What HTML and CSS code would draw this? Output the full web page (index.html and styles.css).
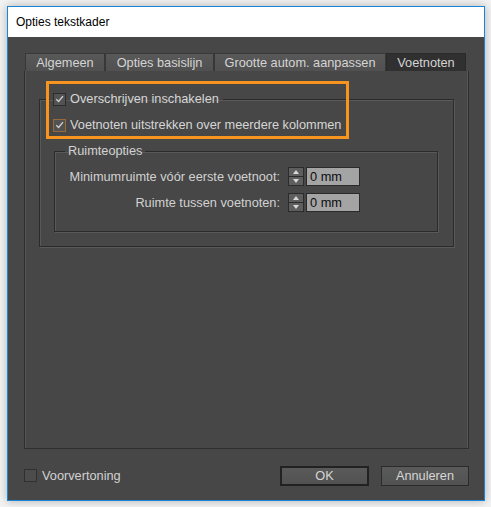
FILE: index.html
```html
<!DOCTYPE html>
<html>
<head>
<meta charset="utf-8">
<link rel="stylesheet" href="styles.css">
</head>
<body>
<div class="window">
  <div class="titlebar">Opties tekstkader</div>
  <div class="client">
    <div class="tabs">
      <div class="tab w1">Algemeen</div>
      <div class="tab w2">Opties basislijn</div>
      <div class="tab w3">Grootte autom. aanpassen</div>
      <div class="tab w4 active">Voetnoten</div>
    </div>
    <div class="panel">
      <fieldset class="group outer">
        <legend class="cbrow"><span class="cb checked"><svg viewBox="0 0 12 12" width="12" height="12"><path d="M2.5 6.2 L5 8.7 L9.8 2.8" fill="none" stroke="#cfcfcf" stroke-width="1.5"/></svg></span>Overschrijven inschakelen</legend>
        <div class="cbrow second"><span class="cb checked focus"><svg viewBox="0 0 12 12" width="12" height="12"><path d="M2.5 6.2 L5 8.7 L9.8 2.8" fill="none" stroke="#cfcfcf" stroke-width="1.5"/></svg></span>Voetnoten uitstrekken over meerdere kolommen</div>
        <fieldset class="group inner">
          <legend class="plain">Ruimteopties</legend>
          <div class="field">
            <span class="lbl">Minimumruimte vóór eerste voetnoot:</span>
            <span class="spin"><span class="half"><span class="up"></span></span><span class="half"><span class="down"></span></span></span>
            <span class="input">0 mm</span>
          </div>
          <div class="field">
            <span class="lbl">Ruimte tussen voetnoten:</span>
            <span class="spin"><span class="half"><span class="up"></span></span><span class="half"><span class="down"></span></span></span>
            <span class="input">0 mm</span>
          </div>
        </fieldset>
      </fieldset>
      <div class="highlight"></div>
    </div>
    <div class="footer">
      <div class="preview"><span class="cb"></span>Voorvertoning</div>
      <div class="buttons">
        <div class="btn ok">OK</div>
        <div class="btn">Annuleren</div>
      </div>
    </div>
  </div>
</div>
</body>
</html>
```

FILE: styles.css
```css
html, body {
  margin: 0;
  padding: 0;
  background: #f3f3f3;
}
body {
  width: 491px;
  height: 507px;
  overflow: hidden;
  font-family: "Liberation Sans", Arial, sans-serif;
  font-size: 12.75px;
}
.window {
  margin: 6px 0 0 7px;
  width: 478px;
  height: 495px;
  box-sizing: border-box;
  border: 1px solid #1a84d6;
  box-shadow: 0 0 9px rgba(0,0,0,0.28);
  display: flex;
  flex-direction: column;
  background: #474747;
}
.titlebar {
  height: 30px;
  background: #ffffff;
  color: #000;
  font-size: 12px;
  line-height: 30px;
  padding-left: 8px;
}
.client {
  flex: 1;
  display: flex;
  flex-direction: column;
  padding: 16px 15px 14px 16px;
  color: #d2d2d2;
}
.tabs {
  display: flex;
  height: 18px;
  margin-left: 1px;
}
.tab {
  box-sizing: border-box;
  height: 18px;
  line-height: 17px;
  text-align: center;
  border: 1px solid #383838;
  border-bottom: none;
  background: linear-gradient(#595959, #505050);
  color: #d4d4d4;
}
.tab.w1 { width: 80px; }
.tab.w2 { width: 109px; }
.tab.w3 { width: 172px; }
.tab.w4 { width: 80px; }
.tab.active {
  background: #303030;
  border-color: #2a2a2a;
}
.panel {
  flex: 1;
  position: relative;
  border: 1px solid #2e2e2e;
  border-top: none;
  box-shadow: inset 1px 0 0 #555, inset -1px 0 0 #555;
  padding: 21px 14px 0 14px;
}
.group {
  margin: 0;
  border: 1px solid #2b2b2b;
  box-shadow: 1px 1px 0 #595959, inset 1px 1px 0 #595959;
  min-width: 0;
}
.outer {
  padding: 0 15px 14px 14px;
}
.inner {
  margin-top: 12px;
  padding: 0 0 19px 0;
}
legend {
  line-height: 14px;
  height: 14px;
}
.cbrow {
  display: flex;
  align-items: center;
  line-height: 14px;
  color: #d6d6d6;
}
legend.cbrow {
  margin-left: -4px;
  padding: 0 4px 0 3px;
}
.cbrow.second {
  margin-top: 12px;
  margin-left: -1px;
}
legend.plain {
  margin-left: 10px;
  padding: 0 3px;
}
.cb {
  box-sizing: border-box;
  width: 13px;
  height: 13px;
  border: 1px solid #2c2c2c;
  background: #525252;
  margin-right: 4px;
  display: inline-flex;
  align-items: center;
  justify-content: center;
  flex: none;
}
.cb svg {
  display: block;
}
.cb.focus {
  border-color: #9a6a36;
}
.field {
  display: flex;
  align-items: center;
  height: 19px;
  margin-top: 9px;
}
.field + .field {
  margin-top: 7px;
}
.lbl {
  width: 225px;
  text-align: right;
  margin-right: 8px;
  color: #d2d2d2;
}
.spin {
  box-sizing: border-box;
  width: 16px;
  height: 19px;
  margin-right: 2px;
  border: 1px solid #2b2b2b;
  display: flex;
  flex-direction: column;
  background: #2b2b2b;
  gap: 1px;
}
.half {
  flex: 1;
  background: #5e5e5e;
  display: flex;
  align-items: center;
  justify-content: center;
}
.up {
  width: 0;
  height: 0;
  border-left: 3px solid transparent;
  border-right: 3px solid transparent;
  border-bottom: 4px solid #d8d8d8;
}
.down {
  width: 0;
  height: 0;
  border-left: 3px solid transparent;
  border-right: 3px solid transparent;
  border-top: 4px solid #d8d8d8;
}
.input {
  box-sizing: border-box;
  width: 54px;
  height: 19px;
  border: 1px solid #2b2b2b;
  background: #a4a4a4;
  color: #0c0c10;
  padding-left: 3px;
  line-height: 17px;
}
.highlight {
  position: absolute;
  left: 21px;
  top: 10px;
  width: 303px;
  height: 58px;
  box-sizing: border-box;
  border: 3px solid #f7941e;
}
.footer {
  margin-top: 16px;
  height: 21px;
  display: flex;
  align-items: center;
  justify-content: space-between;
}
.preview {
  display: flex;
  align-items: center;
  color: #d2d2d2;
}
.preview .cb {
  width: 13px;
  height: 13px;
  background: #4c4c4c;
  border-color: #303030;
  margin-right: 5px;
}
.buttons {
  display: flex;
  gap: 12px;
}
.btn {
  box-sizing: border-box;
  width: 88px;
  height: 20px;
  border: 1px solid #2b2b2b;
  background: linear-gradient(#5a5a5a, #525252);
  text-align: center;
  line-height: 18px;
  color: #d6d6d6;
}
.btn.ok {
  width: 89px;
  border: 2px solid #222;
  line-height: 16px;
}
```
